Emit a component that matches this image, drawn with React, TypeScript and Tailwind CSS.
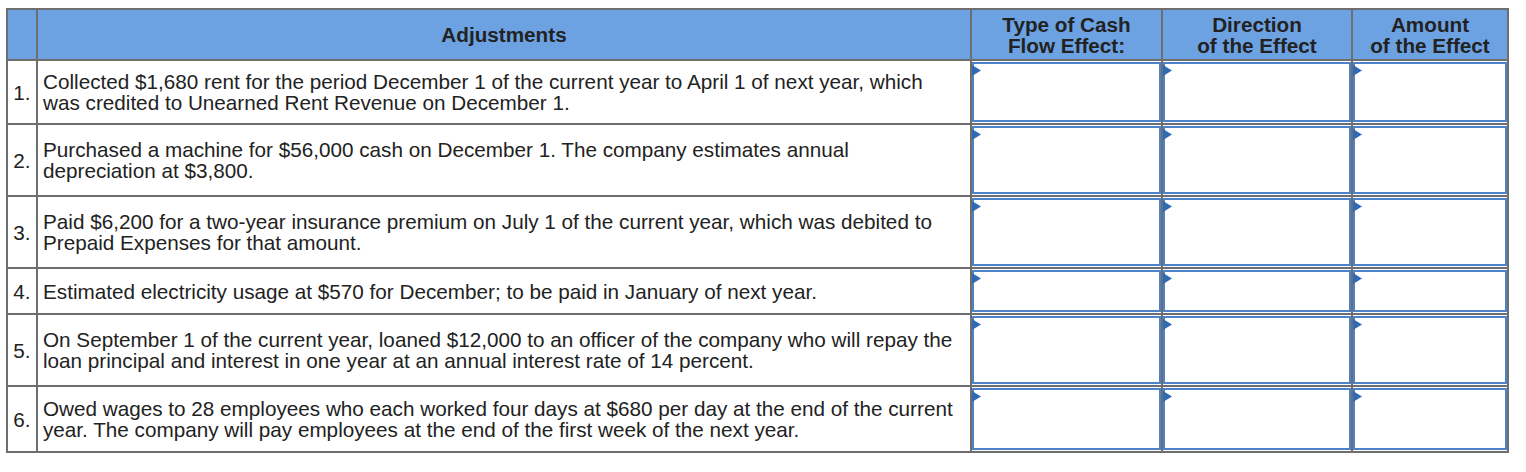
const rows = [
  {
    n: "1.",
    h: "h-[62px]",
    text: "Collected $1,680 rent for the period December 1 of the current year to April 1 of next year, which was credited to Unearned Rent Revenue on December 1.",
  },
  {
    n: "2.",
    h: "h-[70px]",
    text: "Purchased a machine for $56,000 cash on December 1. The company estimates annual depreciation at $3,800.",
  },
  {
    n: "3.",
    h: "h-[70px]",
    text: "Paid $6,200 for a two-year insurance premium on July 1 of the current year, which was debited to Prepaid Expenses for that amount.",
  },
  {
    n: "4.",
    h: "h-[44px]",
    text: "Estimated electricity usage at $570 for December; to be paid in January of next year.",
  },
  {
    n: "5.",
    h: "h-[70px]",
    text: "On September 1 of the current year, loaned $12,000 to an officer of the company who will repay the loan principal and interest in one year at an annual interest rate of 14 percent.",
  },
  {
    n: "6.",
    h: "h-[64px]",
    text: "Owed wages to 28 employees who each worked four days at $680 per day at the end of the current year. The company will pay employees at the end of the first week of the next year.",
  },
];

function InputCell() {
  return (
    <div className="bg-white py-[1px]">
      <div className="relative h-full border-2 border-[#4f83c9] bg-white">
        <svg className="absolute left-[-2px] top-[1px]" width="9" height="11" viewBox="0 0 9 11">
          <polygon points="0,0 9,5.5 0,11" fill="#2f6bb5" />
        </svg>
      </div>
    </div>
  );
}

export default function App() {
  return (
    <div className="min-h-screen bg-white pl-[6px] pt-[8px] font-['Liberation_Sans',Arial,sans-serif] text-[#222]">
      <div className="grid w-fit grid-cols-[28px_932px_189px_188px_154px] gap-[2px] bg-[#6e6e6e] p-[2px]">
        <div className="h-[49px] bg-[#6da2e2]" />
        <div className="flex items-center justify-center bg-[#6da2e2] text-[20.7px] font-bold leading-[21px]">
          Adjustments
        </div>
        <div className="flex items-center justify-center bg-[#6da2e2] text-center text-[20.7px] font-bold leading-[21px]">
          Type of Cash
          <br />
          Flow Effect:
        </div>
        <div className="flex items-center justify-center bg-[#6da2e2] text-center text-[20.7px] font-bold leading-[21px]">
          Direction
          <br />
          of the Effect
        </div>
        <div className="flex items-center justify-center bg-[#6da2e2] text-center text-[20.7px] font-bold leading-[21px]">
          Amount
          <br />
          of the Effect
        </div>

        {rows.map((r) => (
          <div key={r.n} className="contents">
            <div className={`flex items-center justify-center bg-white text-[20.7px] leading-[21px] ${r.h}`}>{r.n}</div>
            <div className="flex items-center bg-white pl-[5px] pr-[10px] text-[20.7px] leading-[21px]">
              <span>{r.text}</span>
            </div>
            <InputCell />
            <InputCell />
            <InputCell />
          </div>
        ))}
      </div>
    </div>
  );
}
